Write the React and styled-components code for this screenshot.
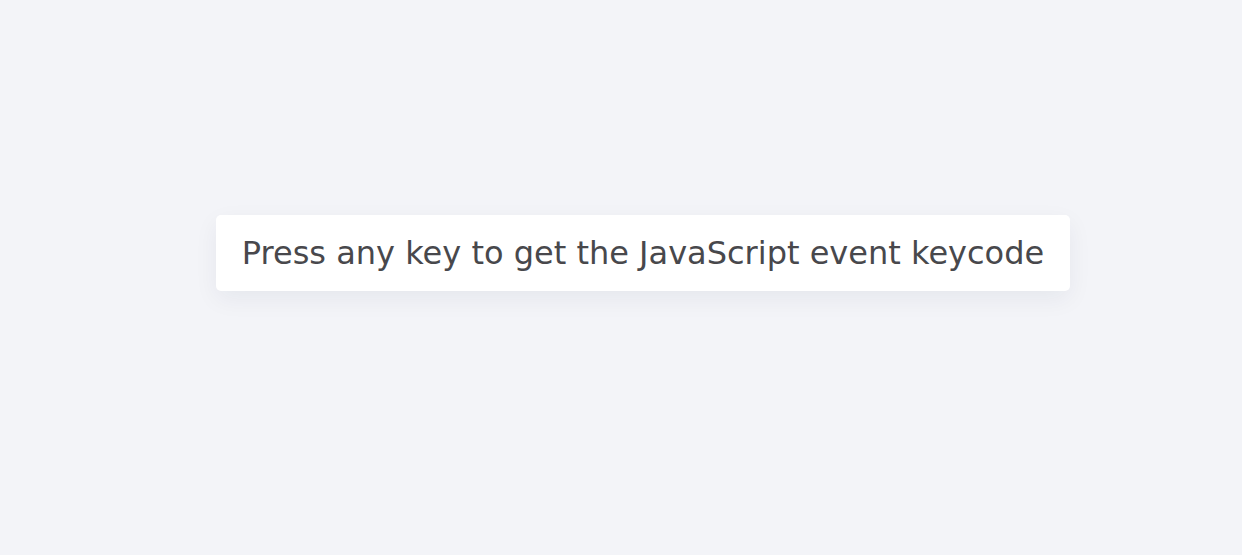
import styled, { createGlobalStyle } from 'styled-components';

const GlobalStyle = createGlobalStyle`
  html, body {
    margin: 0;
    padding: 0;
  }

  body {
    background: #f3f4f8;
    font-family: "DejaVu Sans", "Open Sans", sans-serif;
  }
`;

const Page = styled.main`
  height: 100vh;
  box-sizing: border-box;

  display: flex;
  align-items: center;
  justify-content: center;

  padding: 0 0 49px 44px;
`;

const KeyPrompt = styled.div`
  height: 76px;
  box-sizing: border-box;

  display: flex;
  align-items: center;
  padding: 0 26px;

  background: #fff;
  border-radius: 5px;
  box-shadow: 0 8px 24px rgba(20, 30, 70, 0.06);

  color: #48484c;
  font-size: 32px;
  font-weight: 400;
  white-space: nowrap;
`;

const App = () => {
  return (
    <>
      <GlobalStyle />
      <Page>
        <KeyPrompt>Press any key to get the JavaScript event keycode</KeyPrompt>
      </Page>
    </>
  );
};

export default App;
